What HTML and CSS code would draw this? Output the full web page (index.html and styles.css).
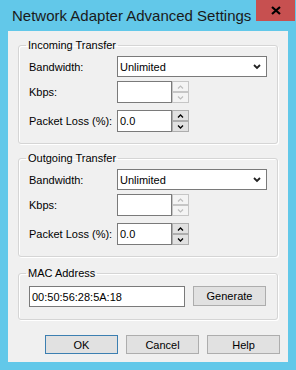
FILE: index.html
```html
<!DOCTYPE html>
<html>
<head>
<meta charset="utf-8">
<link rel="stylesheet" href="styles.css">
</head>
<body>
<div class="window">
  <div class="titlebar">
    <span class="title">Network Adapter Advanced Settings</span>
    <div class="close"><svg width="10" height="9" viewBox="0 0 10 9"><path d="M1 1L9 8M9 1L1 8" stroke="#000" stroke-width="2.2" fill="none"/></svg></div>
  </div>
  <div class="client">
    <fieldset class="group g1">
      <legend>Incoming Transfer</legend>
      <div class="row r1"><span class="lbl">Bandwidth:</span><div class="select"><span>Unlimited</span><svg class="chev" width="8" height="6" viewBox="0 0 8 6"><path d="M1 1L4 4L7 1" stroke="#222" stroke-width="1.8" fill="none"/></svg></div></div>
      <div class="row r2"><span class="lbl">Kbps:</span><div class="spin off"><div class="edit"></div><div class="btns"><div class="sb"><svg width="7" height="4" viewBox="0 0 7 4"><path d="M1 3.5L3.5 1L6 3.5" stroke="#bdbdbd" stroke-width="1.2" fill="none"/></svg></div><div class="sb"><svg width="7" height="4" viewBox="0 0 7 4"><path d="M1 0.5L3.5 3L6 0.5" stroke="#bdbdbd" stroke-width="1.2" fill="none"/></svg></div></div></div></div>
      <div class="row r3"><span class="lbl">Packet Loss (%):</span><div class="spin"><div class="edit">0.0</div><div class="btns"><div class="sb"><svg width="7" height="4" viewBox="0 0 7 4"><path d="M1 3.5L3.5 1L6 3.5" stroke="#000" stroke-width="1.3" fill="none"/></svg></div><div class="sb"><svg width="7" height="4" viewBox="0 0 7 4"><path d="M1 0.5L3.5 3L6 0.5" stroke="#000" stroke-width="1.3" fill="none"/></svg></div></div></div></div>
    </fieldset>
    <fieldset class="group g2">
      <legend>Outgoing Transfer</legend>
      <div class="row r1"><span class="lbl">Bandwidth:</span><div class="select"><span>Unlimited</span><svg class="chev" width="8" height="6" viewBox="0 0 8 6"><path d="M1 1L4 4L7 1" stroke="#222" stroke-width="1.8" fill="none"/></svg></div></div>
      <div class="row r2"><span class="lbl">Kbps:</span><div class="spin off"><div class="edit"></div><div class="btns"><div class="sb"><svg width="7" height="4" viewBox="0 0 7 4"><path d="M1 3.5L3.5 1L6 3.5" stroke="#bdbdbd" stroke-width="1.2" fill="none"/></svg></div><div class="sb"><svg width="7" height="4" viewBox="0 0 7 4"><path d="M1 0.5L3.5 3L6 0.5" stroke="#bdbdbd" stroke-width="1.2" fill="none"/></svg></div></div></div></div>
      <div class="row r3"><span class="lbl">Packet Loss (%):</span><div class="spin"><div class="edit">0.0</div><div class="btns"><div class="sb"><svg width="7" height="4" viewBox="0 0 7 4"><path d="M1 3.5L3.5 1L6 3.5" stroke="#000" stroke-width="1.3" fill="none"/></svg></div><div class="sb"><svg width="7" height="4" viewBox="0 0 7 4"><path d="M1 0.5L3.5 3L6 0.5" stroke="#000" stroke-width="1.3" fill="none"/></svg></div></div></div></div>
    </fieldset>
    <fieldset class="group g3">
      <legend>MAC Address</legend>
      <div class="macrow"><div class="edit mac">00:50:56:28:5A:18</div><div class="btn">Generate</div></div>
    </fieldset>
    <div class="actions">
      <div class="btn default">OK</div>
      <div class="btn">Cancel</div>
      <div class="btn">Help</div>
    </div>
  </div>
</div>
</body>
</html>
```
FILE: styles.css
```css
html, body { margin: 0; padding: 0; }
body {
  width: 296px;
  height: 370px;
  background: #62c8e9;
  font-family: "Liberation Sans", Arial, sans-serif;
  font-size: 11px;
  color: #000;
  overflow: hidden;
}
.window {
  display: flex;
  flex-direction: column;
  height: 370px;
}
.titlebar {
  height: 31px;
  display: flex;
  justify-content: space-between;
  align-items: flex-start;
  padding: 0 1px 0 12px;
}
.title {
  font-family: "Liberation Sans", Arial, sans-serif;
  font-size: 15px;
  line-height: 15px;
  margin-top: 8px;
  white-space: nowrap;
  color: #1a1a1a;
}
.close {
  width: 39px;
  height: 21px;
  flex: none;
  background: #c75050;
  display: flex;
  align-items: center;
  justify-content: center;
}
.client {
  margin: 0 8px;
  background: #f0f0f0;
  height: 331px;
  box-sizing: border-box;
  padding: 8px 10px 0;
  display: flex;
  flex-direction: column;
}
.group {
  margin: 0;
  border: 1px solid #d5d5d5;
  border-radius: 3px;
  box-shadow: inset 1px 1px 0 #fff, 1px 1px 0 #fff;
  padding: 4px 9px 11px 10px;
  min-width: 0;
}
.group legend {
  padding: 0 2px;
  margin-left: -3px;
  line-height: 13px;
  font-size: 11px;
}
.g2 { margin-top: 8px; }
.g3 { margin-top: 10px; padding-top: 6px; padding-bottom: 12px; }
.row {
  display: flex;
  align-items: center;
}
.r1 { height: 21px; }
.r2 { height: 22px; margin-top: 4px; }
.r3 { height: 22px; margin-top: 7px; }
.lbl { width: 88px; flex: none; }
.select {
  width: 150px;
  height: 21px;
  box-sizing: border-box;
  border: 1px solid #7a7a7a;
  background: #fff;
  display: flex;
  align-items: center;
  justify-content: space-between;
  padding: 0 5px 0 2px;
}
.chev { display: block; }
.spin {
  display: flex;
  height: 22px;
}
.edit {
  width: 55px;
  height: 22px;
  box-sizing: border-box;
  border: 1px solid #7a7a7a;
  background: #fff;
  padding: 0 2px;
  display: flex;
  align-items: center;
}
.btns {
  display: flex;
  flex-direction: column;
  width: 17px;
  margin-left: 0;
}
.sb {
  height: 11px;
  box-sizing: border-box;
  border: 1px solid #adadad;
  background: #e1e1e1;
  display: flex;
  align-items: center;
  justify-content: center;
}
.sb svg { display: block; }
.off .sb {
  border-color: #c6c6c6;
  background: #f4f4f4;
}
.macrow {
  display: flex;
  align-items: flex-start;
}
.edit.mac {
  width: 156px;
  height: 21px;
  padding: 0 2px;
  font-size: 11px;
}
.btn {
  width: 73px;
  height: 20px;
  box-sizing: border-box;
  border: 1px solid #adadad;
  background: #e1e1e1;
  display: flex;
  align-items: center;
  justify-content: center;
}
.macrow .btn { margin-left: 8px; }
.actions {
  display: flex;
  justify-content: flex-end;
  gap: 8px;
  margin-top: 15px;
  margin-right: -2px;
}
.actions .btn { height: 19px; }
.btn.default { border-color: #3c7fb1; }
```
